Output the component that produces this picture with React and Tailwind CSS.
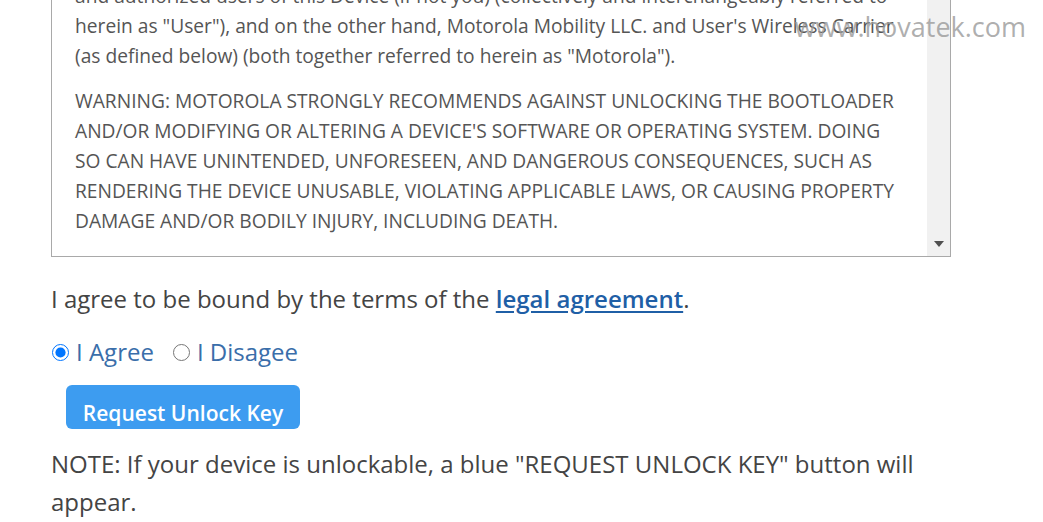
import React, { useState } from 'react';

const firstPara = [
  'and authorized users of this Device (if not you) (collectively and interchangeably referred to',
  'herein as "User"), and on the other hand, Motorola Mobility LLC. and User\'s Wireless Carrier',
  '(as defined below) (both together referred to herein as "Motorola").',
];

const warning = [
  'WARNING: MOTOROLA STRONGLY RECOMMENDS AGAINST UNLOCKING THE BOOTLOADER',
  "AND/OR MODIFYING OR ALTERING A DEVICE'S SOFTWARE OR OPERATING SYSTEM. DOING",
  'SO CAN HAVE UNINTENDED, UNFORESEEN, AND DANGEROUS CONSEQUENCES, SUCH AS',
  'RENDERING THE DEVICE UNUSABLE, VIOLATING APPLICABLE LAWS, OR CAUSING PROPERTY',
  'DAMAGE AND/OR BODILY INJURY, INCLUDING DEATH.',
];

const App = () => {
  const [agree, setAgree] = useState(true);

  return (
    <div className="relative h-[522px] w-[1043px] overflow-hidden bg-white font-['Open_Sans',sans-serif] text-[#4a4a4a]">
      {/* legal text box, scrolled so only the end shows */}
      <div className="ml-[51px] mt-[-30px] flex w-[900px] border border-[#a9a9a9]">
        <div className="flex-1 overflow-hidden pl-[23px] pt-[10px] pb-[20px] text-[19.2px] leading-[30px] text-[#555]">
          <div className="mb-[15px]">
            {firstPara.map((line) => (
              <div key={line} className="whitespace-nowrap">{line}</div>
            ))}
          </div>
          <div>
            {warning.map((line) => (
              <div key={line} className="whitespace-nowrap">{line}</div>
            ))}
          </div>
        </div>
        <div className="flex w-[23px] shrink-0 flex-col items-center justify-end bg-[#f1f1f1] pb-[9px]">
          <svg width="10" height="6" viewBox="0 0 10 6">
            <path d="M0 0h10L5 6z" fill="#505050" />
          </svg>
        </div>
      </div>

      <p className="ml-[51px] mt-[27px] text-[24px] leading-[30px] text-[#444]">
        I agree to be bound by the terms of the{' '}
        <a href="#" className="font-semibold text-[#1f5fa6] underline underline-offset-[3px]">legal agreement</a>.
      </p>

      <div className="ml-[52px] mt-[23px] flex items-center text-[24px] leading-[30px] text-[#3a6eaa]">
        <label className="flex items-center">
          <input
            type="radio"
            name="agree"
            checked={agree}
            onChange={() => setAgree(true)}
            className="m-0 h-[17px] w-[17px]"
          />
          <span className="ml-[7px]">I Agree</span>
        </label>
        <label className="ml-[19px] flex items-center">
          <input
            type="radio"
            name="agree"
            checked={!agree}
            onChange={() => setAgree(false)}
            className="m-0 h-[17px] w-[17px]"
          />
          <span className="ml-[7px]">I Disagee</span>
        </label>
      </div>

      <button className="ml-[66px] mt-[18px] flex h-[44px] w-[234px] items-center justify-center rounded-[6px] bg-[#3d9cf0] pt-[14px] text-[21px] font-semibold text-white">
        Request Unlock Key
      </button>

      <p className="ml-[51px] mt-[16px] w-[900px] text-[24px] leading-[38px] text-[#444]">
        NOTE: If your device is unlockable, a blue "REQUEST UNLOCK KEY" button will appear.
      </p>

      {/* watermark */}
      <div className="pointer-events-none absolute right-[17px] top-[9px] text-[27px] leading-[36px] text-[#999]/80">
        www.hovatek.com
      </div>
    </div>
  );
};

export default App;
